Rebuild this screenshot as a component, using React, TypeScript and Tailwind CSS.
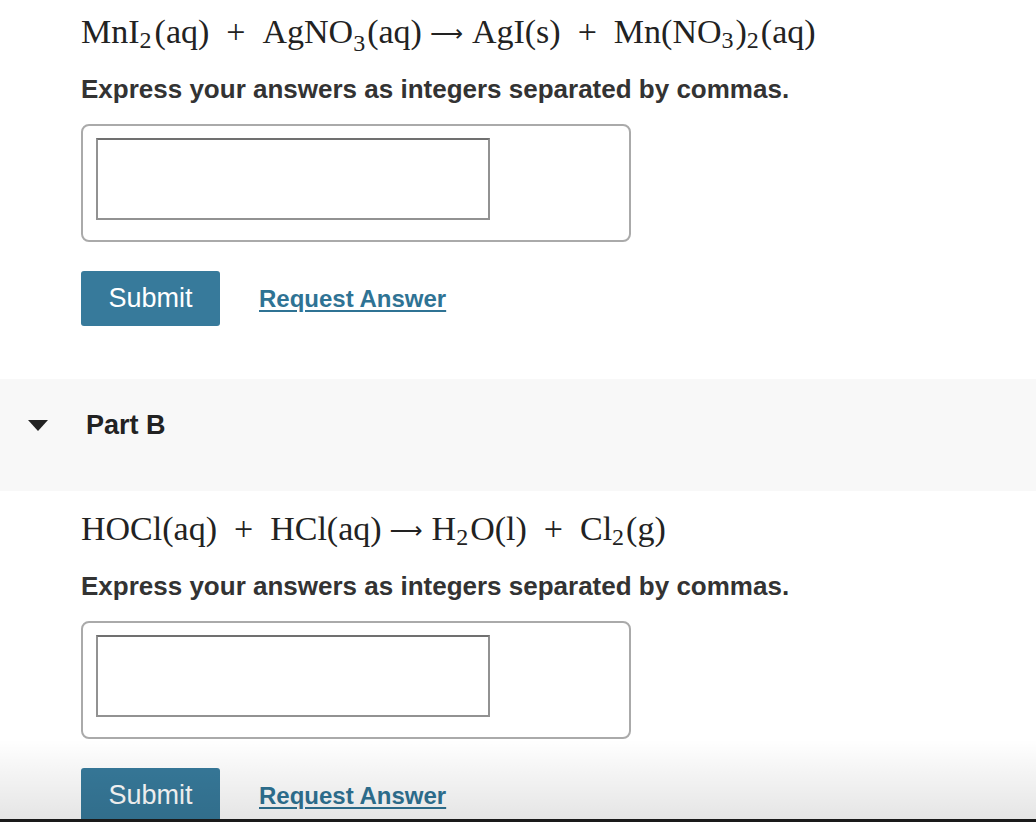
import React from "react";

const serif = { fontFamily: '"Liberation Serif", "DejaVu Serif", serif' };

function Sub({ children, low = false }: { children: React.ReactNode; low?: boolean }) {
  return (
    <span className={`text-[24px] relative mr-[2px] ${low ? "top-[8px]" : "top-[5px]"}`}>{children}</span>
  );
}

function Plus() {
  return <span className="mx-[17px]">+</span>;
}

function Arrow() {
  return (
    <span
      className="ml-[8px] mr-[9px] text-[23px] relative -top-[2px]"
      style={{ fontFamily: '"DejaVu Sans", sans-serif' }}
    >
      ⟶
    </span>
  );
}

function AnswerBlock() {
  return (
    <>
      <p className="mt-[22px] text-[26px] font-bold text-[#333] leading-[30px]">
        Express your answers as integers separated by commas.
      </p>
      <div className="mt-[20px] w-[550px] h-[118px] border-2 border-[#aaaaaa] rounded-[8px] pt-[12px] pl-[13px]">
        <div className="w-[394px] h-[82px] border-2 border-[#929292] border-t-[#707070] bg-white" />
      </div>
      <div className="mt-[29px] flex items-center">
        <button className="w-[139px] h-[55px] bg-[#377a9b] text-white text-[27px] rounded-[3px] leading-none">
          Submit
        </button>
        <a className="ml-[39px] text-[24px] font-bold text-[#2f7394] underline underline-offset-[3px] decoration-2">
          Request Answer
        </a>
      </div>
    </>
  );
}

export default function App() {
  return (
    <div
      className="relative w-[1036px] h-[822px] overflow-hidden bg-white"
      style={{ fontFamily: '"Liberation Sans", Arial, sans-serif' }}
    >
      <div className="pl-[81px] pt-[12px]">
        <div className="h-[40px] text-[34px] leading-[40px] text-[#222] whitespace-nowrap" style={serif}>
          MnI<Sub>2</Sub>
          <span className="ml-[1px]">(aq)</span>
          <Plus />
          AgNO<Sub low>3</Sub>(aq)
          <Arrow />
          AgI(s)
          <Plus />
          Mn(NO<Sub>3</Sub>
          <span>)</span>
          <Sub>2</Sub>
          <span>(aq)</span>
        </div>
        <AnswerBlock />
      </div>

      <div className="mt-[53px] h-[112px] pb-[20px] bg-[#f8f8f8] flex items-center">
        <svg width="20" height="11" viewBox="0 0 20 11" className="ml-[28px]">
          <polygon points="0,0 20,0 10,11" fill="#222" />
        </svg>
        <span className="ml-[38px] text-[27px] font-bold text-[#222]">Part B</span>
      </div>

      <div className="pl-[81px] pt-[18px]">
        <div className="h-[40px] text-[34px] leading-[40px] text-[#222] whitespace-nowrap" style={serif}>
          HOCl(aq)
          <Plus />
          HCl(aq)
          <Arrow />
          H<Sub>2</Sub>O(l)
          <Plus />
          Cl<Sub>2</Sub>(g)
        </div>
        <AnswerBlock />
      </div>

      <div className="pointer-events-none absolute left-0 right-0 bottom-[3px] h-[80px] bg-gradient-to-b from-transparent to-[rgba(0,0,0,0.1)]" />
      <div className="absolute left-0 right-0 bottom-0 h-[3px] bg-[#1a1a1a]" />
    </div>
  );
}
